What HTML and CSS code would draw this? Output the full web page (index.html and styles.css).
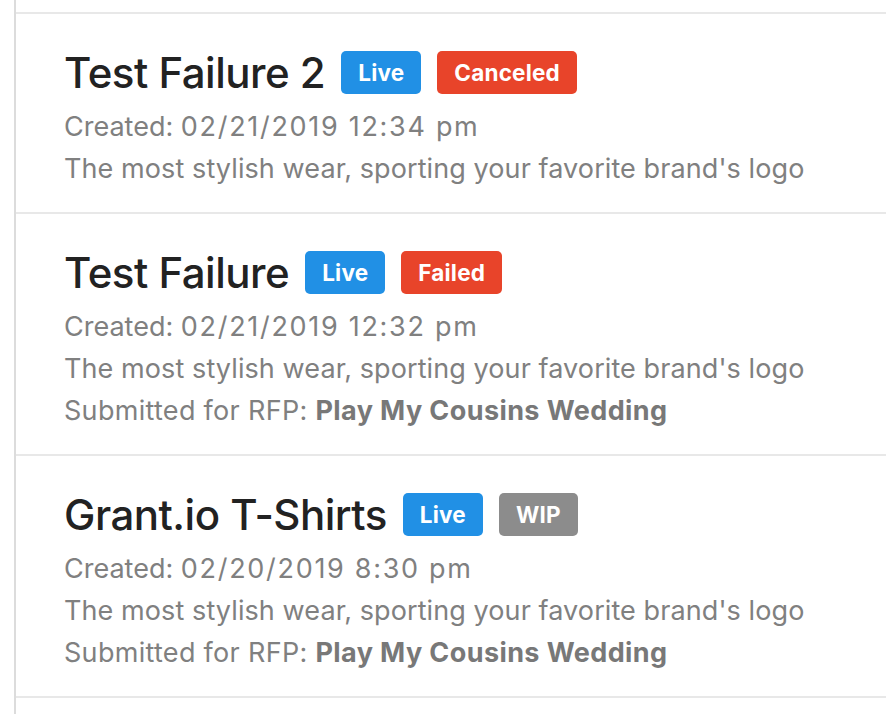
FILE: index.html
```html
<!DOCTYPE html>
<html>
<head>
<meta charset="utf-8">
<link rel="stylesheet" href="styles.css">
</head>
<body>
<div class="list">
  <div class="item item-top"></div>
  <div class="item">
    <div class="title-row">
      <span class="title">Test Failure 2</span>
      <span class="tag tag-blue">Live</span>
      <span class="tag tag-red">Canceled</span>
    </div>
    <div class="meta">Created: <span class="date">02/21/2019 12:34 pm</span></div>
    <div class="meta desc">The most stylish wear, sporting your favorite brand's logo</div>
  </div>
  <div class="item">
    <div class="title-row">
      <span class="title">Test Failure</span>
      <span class="tag tag-blue">Live</span>
      <span class="tag tag-red">Failed</span>
    </div>
    <div class="meta">Created: <span class="date">02/21/2019 12:32 pm</span></div>
    <div class="meta desc">The most stylish wear, sporting your favorite brand's logo</div>
    <div class="meta rfp">Submitted for RFP: <strong>Play My Cousins Wedding</strong></div>
  </div>
  <div class="item">
    <div class="title-row">
      <span class="title">Grant.io T-Shirts</span>
      <span class="tag tag-blue">Live</span>
      <span class="tag tag-gray">WIP</span>
    </div>
    <div class="meta">Created: <span class="date">02/20/2019 8:30 pm</span></div>
    <div class="meta desc">The most stylish wear, sporting your favorite brand's logo</div>
    <div class="meta rfp">Submitted for RFP: <strong>Play My Cousins Wedding</strong></div>
  </div>
  <div class="item item-bottom"></div>
</div>
</body>
</html>
```

FILE: styles.css
```css
html, body {
  margin: 0;
  padding: 0;
  background: #fff;
  height: 100%;
  overflow: hidden;
}
body {
  font-family: Inter, "Noto Sans", sans-serif;
}
.list {
  margin-left: 14px;
  border-left: 2px solid #dcdcdc;
  min-height: 100%;
}
.item {
  padding: 24px 0 22px 48px;
  border-bottom: 2px solid #e8e8e8;
}
.item-top {
  height: 12px;
  padding: 0;
}
.item-bottom {
  border-bottom: none;
  height: 40px;
}
.title-row {
  display: flex;
  align-items: center;
  height: 68px;
}
.title {
  font-size: 42px;
  font-weight: 500;
  color: #222;
  letter-spacing: -0.5px;
  margin-right: 16px;
}
.tag {
  display: inline-flex;
  align-items: center;
  justify-content: center;
  height: 43px;
  padding: 0 17px;
  border-radius: 5px;
  color: #fff;
  font-size: 22.5px;
  font-weight: 700;
  letter-spacing: 0.2px;
  margin-right: 16px;
}
.tag-blue { background: #2190e5; }
.tag-red { background: #e8442a; }
.tag-gray { background: #8c8c8c; }
.meta {
  font-size: 27px;
  line-height: 42px;
  color: #808080;
}
.date {
  letter-spacing: 1.7px;
}
.desc {
  letter-spacing: 0.09px;
}
.rfp {
  letter-spacing: 0.3px;
}
.meta strong {
  color: #787878;
  font-weight: 700;
  letter-spacing: 0.4px;
}
```
